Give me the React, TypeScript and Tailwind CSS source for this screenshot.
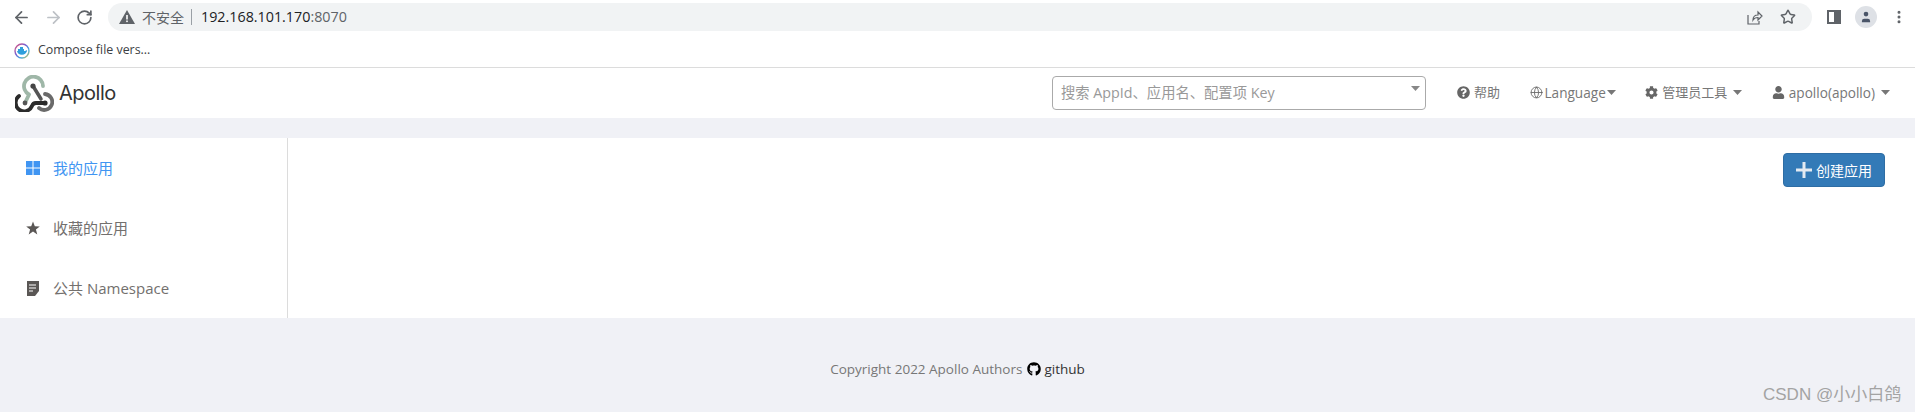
import React from "react";
import { ArrowLeft, ArrowRight, RotateCw, Star, User, EllipsisVertical, Globe } from "lucide-react";
import { FaGithub, FaQuestionCircle, FaUser, FaCog } from "react-icons/fa";

const Caret = () => (
  <svg width="9" height="5" viewBox="0 0 9 5" className="shrink-0"><path d="M0 0h9L4.5 5z" fill="currentColor" /></svg>
);

function Logo() {
  return (
    <svg width="39" height="37" viewBox="15 74 39 37" fill="none" strokeLinecap="round" strokeLinejoin="round">
      <path d="M25 102 L29 93.5 A9.500 9.500 0 1 1 43 85" stroke="#9fb7a8" strokeWidth="3.800" />
      <path d="M33 85 L41 98" stroke="#555" strokeWidth="3.500" />
      <path d="M45 93 A8 8 0 1 1 39 107" stroke="#6a6a6a" strokeWidth="3.800" />
      <path d="M19 95 A8.500 8.500 0 1 0 32 105 Q33 102 36 102 H45" stroke="#2b2b2b" strokeWidth="3.800" />
      <circle cx="33" cy="85" r="2.600" fill="#444" />
      <circle cx="45" cy="102" r="2.600" fill="#2b2b2b" />
      <circle cx="25" cy="102" r="2.400" fill="#555" />
    </svg>
  );
}

function DockerIcon() {
  return (
    <svg width="16" height="16" viewBox="0 0 16 16">
      <defs>
        <linearGradient id="ring" x1="0" y1="0" x2="1" y2="1">
          <stop offset="0" stopColor="#e0527a" />
          <stop offset="0.4" stopColor="#7a5fd0" />
          <stop offset="0.7" stopColor="#3fa9e0" />
          <stop offset="1" stopColor="#e8c547" />
        </linearGradient>
      </defs>
      <circle cx="8" cy="8" r="7" fill="#fff" stroke="url(#ring)" strokeWidth="1.400" />
      <path d="M3 8h8.200c.5-.8 1.200-1 2-.8-.4 2.600-2.400 4.600-5.400 4.600-2.600 0-4.400-1.400-4.800-3.800z" fill="#2e9fdc" />
      <rect x="4" y="6" width="6" height="2" fill="#2e9fdc" />
      <rect x="6" y="4" width="3" height="2" fill="#2e9fdc" />
    </svg>
  );
}

function NavItem({ icon, label, gap, caretGap, textSize }: { icon: React.ReactNode; label: string; gap: string; caretGap?: string; textSize: string }) {
  return (
    <div className={`flex items-center ${gap}`}>
      <span className="text-[#666]">{icon}</span>
      <span className={textSize}>{label}</span>
      {caretGap && <span className={caretGap}><Caret /></span>}
    </div>
  );
}

function SideItem({ icon, label, active }: { icon: React.ReactNode; label: string; active?: boolean }) {
  return (
    <div className={`h-[60px] flex items-center pl-[26px] gap-[13px] text-[15px] ${active ? "text-[#4095f2]" : "text-[#73706e]"}`}>
      <span className="w-[14px] flex justify-center">{icon}</span>
      <span>{label}</span>
    </div>
  );
}

export default function App() {
  return (
    <div className="relative w-[1915px] h-[412px] overflow-hidden bg-[#f0f1f6] font-['Open_Sans','Noto_Sans_CJK_SC',sans-serif]">
      {/* Browser toolbar */}
      <div className="h-[34px] bg-white flex items-start pt-[3px]">
        <div className="w-[108px] h-[28px] flex items-center pl-[12px] gap-[13px] text-[#5f6368]">
          <ArrowLeft size={19} strokeWidth={2.200} />
          <ArrowRight size={19} strokeWidth={2.200} className="text-[#bdc1c6]" />
          <RotateCw size={17} strokeWidth={2.400} />
        </div>
        <div className="w-[1704px] h-[28px] rounded-full bg-[#f1f3f4] flex items-center pl-[10px] pr-[16px] text-[14px]">
          <svg width="16" height="14" viewBox="0 0 16 14" className="ml-[1px]"><path d="M8 0l8 14H0z" fill="#5f6368" /><rect x="7.200" y="5" width="1.600" height="4.500" fill="#fff" /><rect x="7.200" y="10.500" width="1.600" height="1.600" fill="#fff" /></svg>
          <span className="ml-[7px] text-[14px] text-[#5f6368]">不安全</span>
          <span className="ml-[7px] mr-[9px] w-px h-[16px] bg-[#9aa0a6]" />
          <span className="text-[14.300px] text-[#202124] leading-none">192.168.101.170<span className="text-[#5f6368]">:8070</span></span>
          <div className="ml-auto flex items-center gap-[17px] text-[#5f6368]">
            <svg width="16" height="15" viewBox="0 0 16 15" fill="none" stroke="#5f6368" strokeWidth="1.200"><path d="M1 5v9h11v-3" /><path d="M6 10c0-3 2-5 5-5V2l4 4-4 4V7.500c-2 0-4 .8-5 2.500z" /></svg>
            <Star size={16} strokeWidth={2.200} />
          </div>
        </div>
        <div className="flex-1 h-[28px] flex items-center pl-[15px] text-[#5f6368]">
          <div className="w-[14px] h-[14px] border-[2px] border-[#5f6368] border-r-[7px] bg-white" />
          <div className="ml-[14px] w-[22px] h-[22px] rounded-full bg-[#dee1e6] flex items-center justify-center">
            <User size={14} strokeWidth={0} fill="#4a5568" />
          </div>
          <EllipsisVertical size={16} strokeWidth={2.500} className="ml-[14px]" />
        </div>
      </div>

      {/* Bookmarks */}
      <div className="h-[33px] bg-white flex items-center pl-[14px] gap-[8px] text-[12.400px] text-[#3c4043]">
        <DockerIcon />
        <span>Compose file vers...</span>
      </div>
      <div className="h-px bg-[#dcdcdc]" />

      {/* Navbar */}
      <div className="h-[50px] bg-white flex items-center text-[13px] text-[#777]">
        <div className="ml-[15px] flex items-center gap-[5px]">
          <Logo />
          <span className="text-[20px] leading-none text-[#333] font-['Inter',sans-serif] tracking-[-0.500px]">Apollo</span>
        </div>
        <div className="ml-auto w-[374px] h-[34px] border border-[#aaa] rounded-[4px] relative flex items-center pl-[8px] text-[14.300px] text-[#999]">
          <span>搜索 AppId、应用名、配置项 Key</span>
          <span className="absolute right-[5px] top-[9px] text-[#888]"><Caret /></span>
        </div>
        <div className="ml-[31px] flex items-center mr-[25px] gap-[29.500px]">
          <NavItem icon={<FaQuestionCircle size={13} />} label="帮助" gap="gap-[4px]" textSize="text-[13px]" />
          <NavItem icon={<Globe size={13} strokeWidth={1.600} />} label="Language" gap="gap-[2px]" caretGap="ml-[-1px]" textSize="text-[13.600px]" />
          <NavItem icon={<FaCog size={13} />} label="管理员工具" gap="gap-[4px]" caretGap="ml-[2px]" textSize="text-[13px]" />
          <NavItem icon={<FaUser size={13} />} label="apollo(apollo)" gap="gap-[4px]" caretGap="ml-[2px]" textSize="text-[13.600px]" />
        </div>
      </div>

      <div className="h-[20px]" />

      {/* Content */}
      <div className="h-[180px] bg-white flex">
        <div className="w-[288px] border-r border-[#dcdcdc]">
          <SideItem active icon={<svg width="14" height="14" viewBox="0 0 14 14" fill="#4095f2"><rect width="6.500" height="6.500" /><rect x="7.500" width="6.500" height="6.500" /><rect y="7.500" width="6.500" height="6.500" /><rect x="7.500" y="7.500" width="6.500" height="6.500" /></svg>} label="我的应用" />
          <SideItem icon={<svg width="14" height="14" viewBox="0 0 14 14"><path d="M7 .5l1.800 4.700 5 .2-3.900 3.100 1.400 4.900L7 10.600l-4.300 2.800 1.400-4.900L.2 5.400l5-.2z" fill="#5a5755" /></svg>} label="收藏的应用" />
          <SideItem icon={<svg width="14" height="15" viewBox="0 0 14 15"><path d="M1 0h12v10l-4 5H1z" fill="#5a5755" /><path d="M3 4h7M3 7h7M3 10h4" stroke="#fff" strokeWidth="1.100" /></svg>} label="公共 Namespace" />
        </div>
        <div className="flex-1 flex justify-end items-start pt-[15px] pr-[30px]">
          <button className="w-[102px] h-[34px] rounded-[4px] bg-[#337ab7] border border-[#2e6da4] flex items-center pl-[12px] gap-[4px] text-[14px] text-white">
            <svg width="16" height="16" viewBox="0 0 16 16" fill="#e3eaf2"><rect y="6.500" width="16" height="3" /><rect x="6.500" width="3" height="16" /></svg>
            <span>创建应用</span>
          </button>
        </div>
      </div>

      {/* Footer */}
      <div className="h-[94px] flex items-start justify-center pt-[42px] text-[13.500px] text-[#777] leading-[18px]">
        <span>Copyright 2022 Apollo Authors</span>
        <span className="ml-[5px] flex items-center gap-[3px] text-[#333]">
          <FaGithub size={14} className="text-black" />
          github
        </span>
      </div>

      {/* Watermark */}
      <div className="absolute left-[1763px] top-[383px] text-[17px] leading-[24px] text-[#a3a3a3] whitespace-nowrap font-['Liberation_Sans','Noto_Sans_CJK_SC',sans-serif]">
        CSDN @小小白鸽
      </div>
    </div>
  );
}
